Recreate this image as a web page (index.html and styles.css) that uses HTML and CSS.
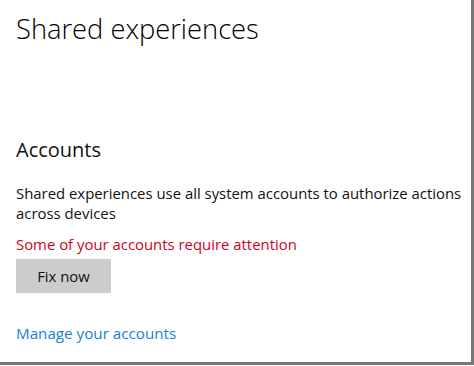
FILE: index.html
```html
<!DOCTYPE html>
<html lang="en">
<head>
    <meta charset="UTF-8">
    <title>Shared experiences</title>
    <link rel="stylesheet" href="styles.css">
</head>
<body>
    <div class="window">
        <h1 class="title">Shared experiences</h1>
        <div class="section">
            <h2>Accounts</h2>
            <p class="desc">Shared experiences use all system accounts to authorize actions across devices</p>
            <p class="warning">Some of your accounts require attention</p>
            <button class="fix">Fix now</button>
            <a class="link" href="#">Manage your accounts</a>
        </div>
    </div>
</body>
</html>
```

FILE: styles.css
```css
* {
    margin: 0;
    padding: 0;
    box-sizing: border-box;
}

body {
    width: 474px;
    height: 366px;
    background: #fff;
    font-family: "Open Sans", "Noto Sans", sans-serif;
    color: #111;
}

.window {
    width: 474px;
    height: 365px;
    border-right: 3px solid #777;
    border-bottom: 3px solid #777;
    padding: 10px 0 0 16px;
    display: flex;
    flex-direction: column;
}

.title {
    font-size: 27.3px;
    font-weight: 300;
    line-height: 38px;
    color: #000;
}

.section {
    margin-top: 89px;
    display: flex;
    flex-direction: column;
    align-items: flex-start;
}

h2 {
    font-size: 20px;
    font-weight: 400;
    line-height: 26px;
}

.desc {
    margin-top: 20px;
    font-size: 14.9px;
    line-height: 20px;
    padding-right: 8px;
}

.warning {
    margin-top: 11px;
    font-size: 14.9px;
    line-height: 20px;
    color: #d0021b;
}

.fix {
    margin-top: 5px;
    width: 95px;
    height: 34px;
    border: none;
    background: #cccccc;
    font-family: inherit;
    font-size: 14.9px;
    color: #111;
}

.link {
    margin-top: 30px;
    font-size: 15.2px;
    line-height: 20px;
    color: #1a7fd8;
    text-decoration: none;
}
```
